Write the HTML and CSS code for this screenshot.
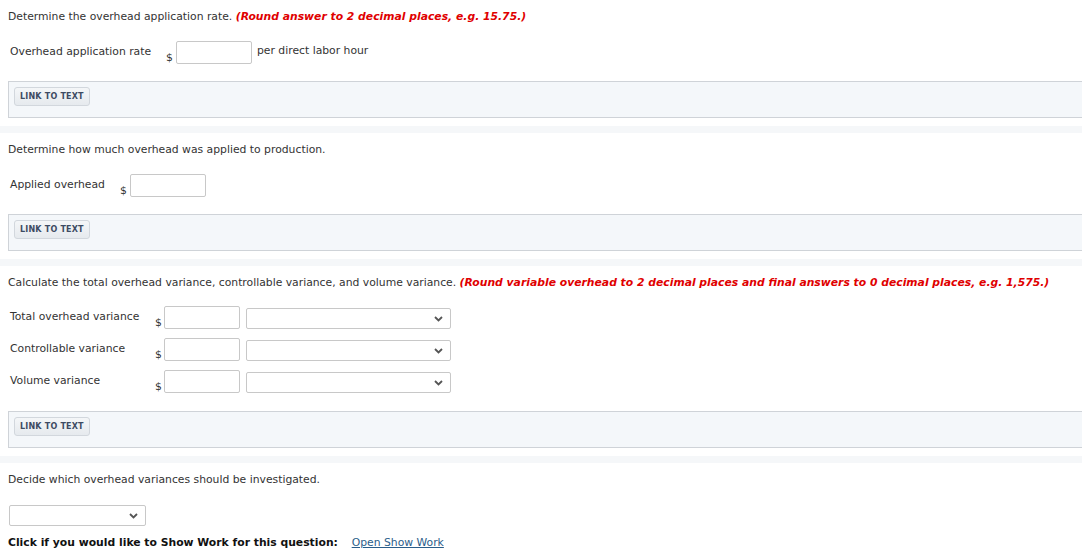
FILE: index.html
```html
<!DOCTYPE html>
<html lang="en">
<head>
    <meta charset="UTF-8">
    <title>Overhead variances</title>
    <link rel="stylesheet" href="styles.css">
</head>
<body>
    <!-- part a -->
    <div class="part">
        <p class="prompt">Determine the overhead application rate. <span class="hint">(Round answer to 2 decimal places, e.g. 15.75.)</span></p>
        <div class="answer-row">
            <label class="answer-label">Overhead application rate</label>
            <span class="dollar">$</span>
            <input type="text" class="amount">
            <span class="unit">per direct labor hour</span>
        </div>
        <div class="resource-bar">
            <button class="link-btn">LINK TO TEXT</button>
        </div>
    </div>
    <div class="divider"></div>

    <!-- part b -->
    <div class="part">
        <p class="prompt">Determine how much overhead was applied to production.</p>
        <div class="answer-row">
            <label class="answer-label">Applied overhead</label>
            <span class="dollar">$</span>
            <input type="text" class="amount">
        </div>
        <div class="resource-bar">
            <button class="link-btn">LINK TO TEXT</button>
        </div>
    </div>
    <div class="divider"></div>

    <!-- part c -->
    <div class="part">
        <p class="prompt">Calculate the total overhead variance, controllable variance, and volume variance. <span class="hint">(Round variable overhead to 2 decimal places and final answers to 0 decimal places, e.g. 1,575.)</span></p>
        <div class="answer-grid">
            <label class="answer-label">Total overhead variance</label>
            <span class="dollar">$</span>
            <input type="text" class="amount">
            <span class="select-wrap wide">
                <select class="dropdown"><option></option><option>Favorable</option><option>Unfavorable</option><option>Neither favorable nor unfavorable</option></select>
                <svg class="chevron" width="9" height="6" viewBox="0 0 9 6"><path d="M1 1l3.5 3.5L8 1" fill="none" stroke="#555" stroke-width="1.8"/></svg>
            </span>

            <label class="answer-label">Controllable variance</label>
            <span class="dollar">$</span>
            <input type="text" class="amount">
            <span class="select-wrap wide">
                <select class="dropdown"><option></option><option>Favorable</option><option>Unfavorable</option><option>Neither favorable nor unfavorable</option></select>
                <svg class="chevron" width="9" height="6" viewBox="0 0 9 6"><path d="M1 1l3.5 3.5L8 1" fill="none" stroke="#555" stroke-width="1.8"/></svg>
            </span>

            <label class="answer-label">Volume variance</label>
            <span class="dollar">$</span>
            <input type="text" class="amount">
            <span class="select-wrap wide">
                <select class="dropdown"><option></option><option>Favorable</option><option>Unfavorable</option><option>Neither favorable nor unfavorable</option></select>
                <svg class="chevron" width="9" height="6" viewBox="0 0 9 6"><path d="M1 1l3.5 3.5L8 1" fill="none" stroke="#555" stroke-width="1.8"/></svg>
            </span>
        </div>
        <div class="resource-bar after-grid">
            <button class="link-btn">LINK TO TEXT</button>
        </div>
    </div>
    <div class="divider"></div>

    <!-- part d -->
    <div class="part">
        <p class="prompt">Decide which overhead variances should be investigated.</p>
        <span class="select-wrap narrow">
            <select class="dropdown"><option></option><option>Total overhead variance</option><option>Controllable variance</option><option>Volume variance</option></select>
            <svg class="chevron" width="9" height="6" viewBox="0 0 9 6"><path d="M1 1l3.5 3.5L8 1" fill="none" stroke="#555" stroke-width="1.8"/></svg>
        </span>
        <p class="show-work">Click if you would like to Show Work for this question: <a href="#" class="show-work-link">Open Show Work</a></p>
    </div>
</body>
</html>
```

FILE: styles.css
```css
* {
    margin: 0;
    padding: 0;
    box-sizing: border-box;
}
html, body {
    overflow: hidden;
}
body {
    font-family: 'DejaVu Sans', Verdana, sans-serif;
    font-size: 10.8px;
    color: #333;
    background: white;
}
.part {
    padding: 10px 0 8px 8px;
}
.prompt {
    line-height: 14px;
}
.hint {
    color: #e00000;
    font-weight: bold;
    font-style: italic;
}
.answer-row {
    display: flex;
    align-items: flex-start;
    margin: 17px 0 0 2px;
}
.answer-label {
    line-height: 14px;
    padding-top: 4px;
    margin-right: 15px;
}
.dollar {
    align-self: flex-end;
    line-height: 14px;
    margin-right: 3px;
    margin-bottom: -1px;
}
.amount {
    width: 76px;
    height: 23px;
    border: 1px solid #c8c8c8;
    border-radius: 2px;
    font: inherit;
    padding: 0 4px;
}
.unit {
    line-height: 14px;
    padding-top: 3px;
    margin-left: 5px;
}
.answer-grid {
    display: grid;
    grid-template-columns: 145px auto auto auto;
    justify-content: start;
    row-gap: 9px;
    margin: 16px 0 0 2px;
}
.answer-grid .answer-label {
    margin-right: 0;
}
.answer-grid .dollar {
    margin-right: 2px;
}
.select-wrap {
    position: relative;
    display: inline-block;
}
.select-wrap.wide {
    margin: 2px 0 0 6px;
    width: 205px;
}
.select-wrap.narrow {
    display: block;
    margin: 18px 0 0 1px;
    width: 137px;
}
.dropdown {
    appearance: none;
    -webkit-appearance: none;
    width: 100%;
    height: 21px;
    border: 1px solid #c8c8c8;
    border-radius: 2px;
    background: white;
    font: inherit;
}
.chevron {
    position: absolute;
    right: 8px;
    top: 8px;
    pointer-events: none;
}
.resource-bar {
    margin-top: 17px;
    height: 37px;
    margin-right: -20px;
    background: #f4f7fa;
    border: 1px solid #cfd3d8;
    padding: 5px 5px;
}
.resource-bar.after-grid {
    margin-top: 18px;
}
.link-btn {
    height: 19px;
    padding: 0 5px;
    font-family: 'DejaVu Sans', Verdana, sans-serif;
    font-size: 8px;
    font-weight: bold;
    letter-spacing: 0.2px;
    color: #3d4b63;
    background: linear-gradient(#f4f6f8, #e6eaee);
    border: 1px solid #d2d7dd;
    border-radius: 3px;
}
.divider {
    height: 7px;
    background: #f5f7f9;
}
.show-work {
    margin-top: 10px;
    font-weight: bold;
    color: #111;
    line-height: 14px;
}
.show-work-link {
    font-weight: normal;
    color: #2a5d8a;
    margin-left: 10px;
}
```
